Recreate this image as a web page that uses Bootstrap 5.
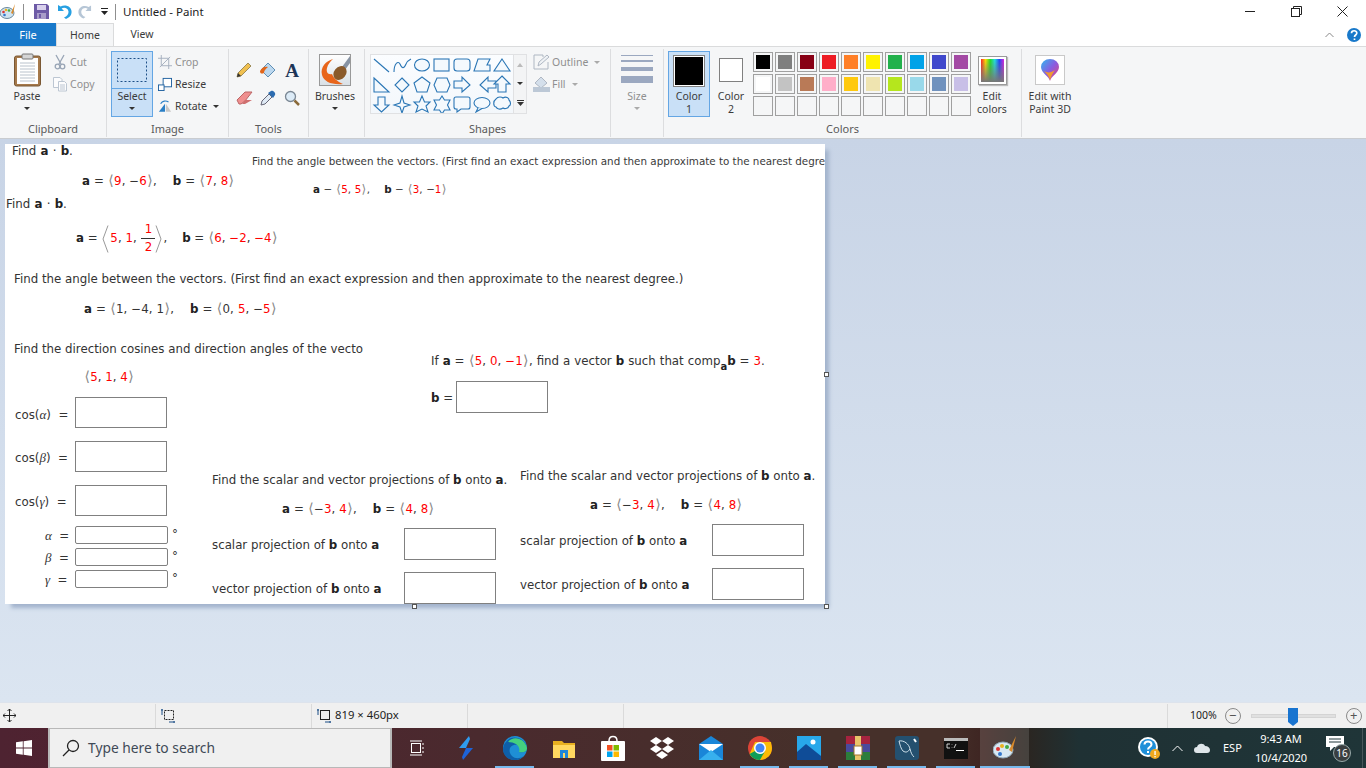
<!DOCTYPE html>
<html lang="en">
<head>
<meta charset="utf-8">
<title>Untitled - Paint</title>
<link href="https://cdn.jsdelivr.net/npm/bootstrap@5.3.0/dist/css/bootstrap.min.css" rel="stylesheet">
<style>
html,body{height:100%;overflow:hidden}
body{width:1366px;height:768px;font-family:"Noto Sans","Open Sans",sans-serif;font-size:11px;color:#3b3b3b;background:#fff}
svg{display:block;flex:none}
.titlebar{height:23px;background:#fff;flex:none}
.tb-sep{width:1px;height:16px;background:#8f8f8f}
.tm6{margin-left:6px}.tm8{margin-left:8px}.tm10{margin-left:10px}
.title-text{font-size:11.5px;color:#222;margin-left:7px;line-height:23px}
.winbtn{width:46px;height:23px}
.winend{margin-right:1px}
.tabrow{height:23px;background:#fff;flex:none}
.file-tab{width:56px;background:#1979ca;color:#fff;font-size:11px;line-height:23px;text-align:center}
.home-tab{width:58px;background:#f5f6f7;border:1px solid #dadbdc;border-bottom:0;line-height:23px;text-align:center;color:#3b3b3b;font-size:10.5px}
.view-tab{width:56px;line-height:23px;text-align:center;color:#3b3b3b;font-size:10.5px}
.ribbon{height:93px;background:#f5f6f7;border-top:1px solid #dadbdc;border-bottom:1px solid #c9ccd0;padding:2px 0 1px;flex:none}
.rgroup{border-right:1px solid #dcdddf;display:flex;flex-direction:column;flex:none}
.rbody{height:72px;display:flex;padding-top:2px}
.rlabel{height:16px;line-height:16px;text-align:center;color:#5a5a5a;font-size:11px}
.w1{width:107px}.w2{width:122px}.w3{width:80px}.w4{width:56px}.w5{width:246px}.w6{width:53px}.w7{width:358px}.w8{width:60px;border-right:0}
.rbig{display:flex;flex-direction:column;align-items:center;flex:none;width:42px;height:66px;line-height:14px;color:#3b3b3b;text-align:center;font-size:10.5px}
.ricon{height:38px;display:flex;align-items:center;justify-content:center;flex:none}
.rbig span{display:block;height:13px;line-height:13px}
.ricon + span{margin-top:1px}
.caret-d{width:0;height:0;border-left:3px solid transparent;border-right:3px solid transparent;border-top:3px solid #333;flex:none}
.rbig .caret-d{margin-top:4px}
.caret-g{border-top-color:#aaa}
.m-paste{width:46px;margin-left:4px}
.sel-btn{margin-left:4px;background:#c9e0f7;border:1px solid #64a6e4}
.sel-btn .ricon{width:100%;height:37px;border-bottom:1px solid #64a6e4}
.cmdcol{display:flex;flex-direction:column;flex:none}
.m-c1{margin-left:2px}.m-c2{margin-left:5px}.m-c3{margin-left:6px}
.m-c2 svg{margin-right:1px}
.rsmall{height:22px;display:flex;align-items:center;gap:2px;white-space:nowrap;color:#3b3b3b;font-size:10.5px}
.rsmall span{padding-top:2px}
.dim{color:#8f8f8f}
.dim svg{opacity:.75}
.rsmall .caret-d{margin-left:4px}
.toolgrid{display:grid;grid-template-columns:repeat(3,24px);grid-auto-rows:28px;margin:5px 0 0 3px;justify-items:center;align-items:center}
.tool-a{font-family:"Liberation Serif",serif;font-size:19px;font-weight:700;color:#1d3557;line-height:19px}
.m-brush{width:52px}
.gallery{width:157px;height:60px;margin:3px 0 0 5px;border:1px solid #e0e1e3;background:linear-gradient(#fbfdff,#f3f7fb);flex:none}
.gal-scroll{width:14px;background:#f3f4f5;border-left:1px solid #e0e1e3}
.gal-scroll>div{flex:1;display:flex;align-items:center;justify-content:center}
.caret-u{width:0;height:0;border-left:3px solid transparent;border-right:3px solid transparent;border-bottom:4px solid #bbb}
.m-size{width:52px}
.size-ic{margin-top:-2px}
.col1-btn{margin-left:4px;background:#c9e0f7;border:1px solid #64a6e4}
.col1-btn .ricon{height:37px}
.swatch-big{width:32px;height:32px;background:#000;border:1px solid #808080;box-shadow:inset 0 0 0 1px #fff}
.swatch-2{width:24px;height:24px;background:#fff;border:1px solid #808080}
.palette{display:grid;grid-template-columns:repeat(10,20px);grid-auto-rows:20px;gap:2px;margin:1px 0 0 1px;align-self:flex-start;flex:none}
.pc{border:1px solid #a0a0a0;padding:2px;background-clip:content-box;background-color:#fff}
.pc-e{background:none;padding:0}
.c1{background-color:#000}.c2{background-color:#7f7f7f}.c3{background-color:#880015}.c4{background-color:#ed1c24}.c5{background-color:#ff7f27}.c6{background-color:#fff200}.c7{background-color:#22b14c}.c8{background-color:#00a2e8}.c9{background-color:#3f48cc}.c10{background-color:#a349a4}
.c11{background-color:#fff}.c12{background-color:#c3c3c3}.c13{background-color:#b97a57}.c14{background-color:#ffaec9}.c15{background-color:#ffc90e}.c16{background-color:#efe4b0}.c17{background-color:#b5e61d}.c18{background-color:#99d9ea}.c19{background-color:#7092be}.c20{background-color:#c8bfe7}
.m-edit{width:38px;margin-left:2px}.m-3d{width:56px}
.edit-ic{width:29px;height:29px;border:1px solid #9a9a9a;padding:2px;background:#fff;box-shadow:1px 1px 1px #bbb}
.edit-ic>div{width:100%;height:100%;background:linear-gradient(transparent,#777),linear-gradient(90deg,#ff2020,#ffe000,#20e020,#20e0e0,#2040ff,#e020e0)}
.d3-ic{width:30px;height:30px;border:1px solid #c9c9c9;background:#fff;display:flex;align-items:center;justify-content:center}
.canvasarea{height:563px;flex:none;background:linear-gradient(#c8d4e6,#dbe5f1);position:relative;overflow:hidden}
.sheet{position:absolute;left:5px;top:5px;width:820px;height:460px;background:#fff;box-shadow:5px 5px 4px -1px #a3b4cd;overflow:hidden;font-family:"DejaVu Sans",sans-serif;font-size:11.8px;color:#333}
.handle{position:absolute;width:5px;height:5px;background:#fff;border:1px solid #555}
.h1{left:824px;top:233px}.h2{left:412px;top:465px}.h3{left:824px;top:465px}
.t{position:absolute;white-space:nowrap;line-height:16px;margin-top:1px}
.t b{color:#222}
.r{color:#f00}
.g{color:#888;font-size:14px;line-height:14px;margin:0 .4px}
.mth{word-spacing:.25px}
.wide-dot{word-spacing:.5px}
.blur{font-size:10.35px;color:#3a3a3a}
.blur .g{font-size:12px}
.big-a{display:inline-block;vertical-align:middle;margin:0 1px}
.frac{display:inline-flex;flex-direction:column;align-items:center;vertical-align:middle;width:14px;margin:0 -1px 0 1px}
.frac span{display:block;height:17px;line-height:17px;width:100%;text-align:center;color:#f00}
.frac span + span{border-top:1px solid #333;height:18px}
.greek{font-family:"Liberation Serif",serif;font-style:italic;font-size:13px}
.box{position:absolute;width:92px;height:32px;border:1px solid #808080;border-radius:0;padding:0;min-height:0}
.box-31{height:31px}
.box-s{position:absolute;width:93px;height:18px;border:1px solid #808080;border-radius:2px;padding:0;min-height:0}
.statusbar{height:26px;flex:none;background:#f0f0f0;border-top:1px solid #dde3ec;font-size:10.5px;color:#222}
.st{width:156px;border-right:1px solid #dadada;height:24px;display:flex;align-items:center;flex:none;gap:4px}
.st1{padding-left:3px}.st2{padding-left:5px}.st3{padding-left:5px}
.st3 span{font-size:11.3px}
.st-fill{flex:1;border-right:1px solid #dadada;height:24px}
.zoomwrap{width:198px;flex:none;padding-left:22px}
.zbtn{width:16px;height:16px;border:1px solid #8a8a8a;border-radius:50%;display:flex;align-items:center;justify-content:center;background:#f0f0f0;font-size:13px;line-height:1;color:#555;flex:none}
.ztrack{width:85px;height:4px;background:#e0e0e0;border:1px solid #d4d4d4;position:relative;margin:0 10px 0 10px;flex:none}
.zthumb{position:absolute;left:36px;top:-7px}
.taskbar{height:40px;flex:none;color:#fff;background:linear-gradient(90deg,#4e2331 0,#502230 8%,#4a2a2e 35%,#46302a 60%,#46302a 69%,#3e2522 72%,#2a2622 75.4%,#1f3134 79%,#1f3538 100%)}
.startb{width:48px;display:flex;align-items:center;justify-content:center;flex:none}
.searchb{width:344px;background:#f0f0f0;border:2px solid #b8b8b8;border-top-width:1px;border-bottom-width:1px;display:flex;align-items:center;padding-left:12px;gap:8px;color:#3f4a57;font-size:13.8px;flex:none;font-family:"Noto Sans",sans-serif}
.searchb span{padding-top:1px}
.tbi{width:49px;display:flex;align-items:center;justify-content:center;position:relative;flex:none}
.tbi.on::after{content:"";position:absolute;left:5px;right:5px;bottom:0;height:2px;background:#76b9ed}
.tbi.act::after{left:0;right:-1px}
.tbi.act{background:rgba(255,255,255,.13)}
.tray{font-size:11px;flex:1}
.ty-help{margin-left:108px}
.ty-up{margin-left:11px}
.ty-cloud{margin-left:11px}
.ty-esp{margin-left:13px;width:22px}
.clock{text-align:center;line-height:19px;font-size:11px;width:72px;flex:none}
.notif{position:relative;width:24px;height:24px;margin-left:9px;flex:none}
.nbadge{position:absolute;left:7px;top:8px;width:18px;height:18px;border-radius:50%;background:#3a3f41;border:1px solid #9aa;font-size:10px;line-height:16px;text-align:center;color:#fff}
.ty-edge{width:1px;height:40px;background:#47565a;margin-left:12px}
/* positions on the pasted sheet */
.a1{left:7px;top:-2px}.a2{left:247px;top:8px}.a3{left:77px;top:28px}.a4{left:308px;top:36px}.a5{left:1px;top:51px}.a6{left:71px;top:76px}
.a7{left:9px;top:126px}.a8{left:79px;top:156px}.a9{left:9px;top:196px;width:349px;overflow:hidden}.a10{left:79px;top:224px}
.a11{left:10px;top:262px}.a12{left:10px;top:305px}.a13{left:10px;top:349px}
.a14{left:40px;top:383px}.a15{left:40px;top:405px}.a16{left:40px;top:427px}
.d1{left:167px;top:381px}.d2{left:167px;top:403px}.d3{left:167px;top:425px}
.b1{left:70px;top:253px}.b2{left:70px;top:297px}.b3{left:70px;top:341px}
.b4{left:70px;top:382px}.b5{left:70px;top:404px}.b6{left:70px;top:426px}
.a17{left:207px;top:327px}.a18{left:277px;top:356px}.a19{left:207px;top:392px}.a20{left:207px;top:436px}
.b7{left:399px;top:384px}.b8{left:399px;top:428px}
.a21{left:426px;top:208px}.a-sub{font-size:10px;bottom:-.5em}.a22{left:426px;top:245px}.b9{left:451px;top:237px}
.a23{left:515px;top:323px}.a24{left:585px;top:352px}.a25{left:515px;top:388px}.a26{left:515px;top:432px}
.b10{left:707px;top:380px}.b11{left:707px;top:424px}
</style>
</head>
<body class="d-flex flex-column">

<!-- Title bar -->
<div class="titlebar d-flex align-items-center">
  <svg width="17" height="17" viewBox="0 0 17 17"><ellipse cx="7" cy="10" rx="7" ry="5.5" fill="#cfe3f0" stroke="#6b8aa0"/><circle cx="3.5" cy="9" r="1.3" fill="#d33"/><circle cx="6" cy="7" r="1.3" fill="#e9b320"/><circle cx="9" cy="7.5" r="1.3" fill="#4a4"/><circle cx="4.5" cy="12" r="1.3" fill="#37c"/><path d="M15 1 L11 10 L13 11 Z" fill="#d98a2b"/></svg>
  <div class="tb-sep tm6"></div>
  <svg class="tm10" width="15" height="15" viewBox="0 0 15 15"><path d="M0 0H13L15 2V15H0Z" fill="#6d5aa6"/><rect x="3" y="1" width="9" height="5" fill="#d8d0ec"/><rect x="3" y="9" width="9" height="6" fill="#a89cc9"/><rect x="5" y="10" width="2" height="4" fill="#6d5aa6"/></svg>
  <svg class="tm8" width="15" height="15" viewBox="0 0 15 15"><path d="M1 1V7H7L4.6 4.6C7 3 11 4 11.5 7.5C11.8 10 10 12.5 7 13.5L9 15C13 13.5 15 10.5 14.5 7C14 2.5 8.5 0 3.6 2.6Z" fill="#27a0e2"/></svg>
  <svg class="tm6" width="14" height="15" viewBox="0 0 15 15"><path d="M14 1V7H8L10.4 4.6C8 3 4 4 3.5 7.5C3.2 10 5 12.5 8 13.5L6 15C2 13.5 0 10.5 .5 7C1 2.5 6.5 0 11.4 2.6Z" fill="#b6c6d6"/></svg>
  <svg class="tm8" width="9" height="9" viewBox="0 0 9 9"><rect x="1" y="1" width="7" height="1" fill="#222"/><path d="M1 4H8L4.5 8Z" fill="#222"/></svg>
  <div class="tb-sep tm6"></div>
  <div class="title-text">Untitled - Paint</div>
  <div class="flex-grow-1"></div>
  <div class="winbtn d-flex align-items-center justify-content-center"><svg width="11" height="11" viewBox="0 0 11 11"><rect x="0" y="5" width="10" height="1" fill="#222"/></svg></div>
  <div class="winbtn d-flex align-items-center justify-content-center"><svg width="11" height="11" viewBox="0 0 11 11" fill="none" stroke="#222"><rect x=".5" y="2.5" width="8" height="8"/><path d="M2.5 2.5V.5H10.5V8.5H8.5"/></svg></div>
  <div class="winbtn winend d-flex align-items-center justify-content-center"><svg width="11" height="11" viewBox="0 0 11 11" stroke="#222" stroke-width="1"><path d="M.5 .5L10.5 10.5M10.5 .5L.5 10.5"/></svg></div>
</div>

<!-- Tabs -->
<div class="tabrow d-flex">
  <div class="file-tab">File</div>
  <div class="home-tab">Home</div>
  <div class="view-tab">View</div>
  <div class="flex-grow-1"></div>
  <div class="d-flex align-items-center gap-2 pe-1">
    <svg width="9" height="6" viewBox="0 0 9 6" fill="none" stroke="#888"><path d="M.5 5L4.5 1L8.5 5"/></svg>
    <svg width="16" height="16" viewBox="0 0 16 16" class="ms-1"><circle cx="8" cy="8" r="7" fill="#1979ca"/><path d="M5.5 6.2C5.5 3 10.8 3 10.8 6C10.8 8 8.5 8 8.5 10M8.5 11.5V13" fill="none" stroke="#fff" stroke-width="1.7"/></svg>
  </div>
</div>

<!-- Ribbon -->
<div class="ribbon d-flex">
  <div class="rgroup w1">
    <div class="rbody">
      <div class="rbig m-paste">
        <div class="ricon"><svg width="27" height="34" viewBox="0 0 27 34"><rect x=".5" y="3" width="26" height="30" rx="2" fill="#a5794b" stroke="#7a5834"/><rect x="3" y="5" width="21" height="26" fill="#fff"/><path d="M6 10H21M6 13H21M6 16H21M6 19H21M6 22H21M6 25H21M6 28H21" stroke="#b9c2cc"/><rect x="8" y="1" width="11" height="5" rx="1" fill="#d5d5d5" stroke="#777"/></svg></div>
        <span>Paste</span><div class="caret-d"></div>
      </div>
      <div class="cmdcol m-c1">
        <div class="rsmall dim"><svg width="16" height="16" viewBox="0 0 16 16" fill="none" stroke="#7a8aa0" stroke-width="1.3"><path d="M4 1L9 10M12 1L7 10"/><circle cx="5.5" cy="12.5" r="2.3"/><circle cx="10.5" cy="12.5" r="2.3"/></svg><span>Cut</span></div>
        <div class="rsmall dim"><svg width="16" height="16" viewBox="0 0 16 16" fill="#fff" stroke="#a9b6c6"><path d="M1.5 1.5H8L10 3.5V11.5H1.5Z"/><path d="M6.5 5.5H12.5L14.5 7.5V15H6.5Z"/><path d="M8 9H13M8 11H13M8 13H13"/></svg><span>Copy</span></div>
      </div>
    </div>
    <div class="rlabel">Clipboard</div>
  </div>

  <div class="rgroup w2">
    <div class="rbody">
      <div class="rbig sel-btn">
        <div class="ricon"><svg width="30" height="24" viewBox="0 0 30 24"><rect x=".5" y=".5" width="29" height="23" fill="none" stroke="#1c4f86" stroke-dasharray="2 2"/></svg></div>
        <span>Select</span><div class="caret-d"></div>
      </div>
      <div class="cmdcol m-c2">
        <div class="rsmall dim"><svg width="14" height="14" viewBox="0 0 15 15" fill="none" stroke="#8a97ab"><path d="M3.5 0V11.5H15M0 3.5H11.5V15"/><path d="M2 13L13 2"/></svg><span>Crop</span></div>
        <div class="rsmall"><svg width="14" height="14" viewBox="0 0 15 15" fill="#fff" stroke="#1d5f9e"><rect x="5.5" y="1.5" width="9" height="9"/><rect x=".5" y="8.5" width="6" height="6"/></svg><span>Resize</span></div>
        <div class="rsmall"><svg width="14" height="14" viewBox="0 0 16 15"><path d="M1 14L8 5V14Z" fill="#2a7fc6"/><path d="M9 14V5L15 14Z" fill="#c8c8c8"/><path d="M3 5C5 1.5 9 1 12 3" fill="none" stroke="#2a7fc6" stroke-width="1.3"/></svg><span>Rotate</span><div class="caret-d"></div></div>
      </div>
    </div>
    <div class="rlabel">Image</div>
  </div>

  <div class="rgroup w3">
    <div class="rbody">
      <div class="toolgrid">
        <svg width="16" height="16" viewBox="0 0 16 16"><path d="M1 15L2 11L12 1L15 4L5 14Z" fill="#f0c050" stroke="#7a6a3a" stroke-width=".7"/><path d="M1 15L2 11L5 14Z" fill="#333"/></svg>
        <svg width="18" height="18" viewBox="0 0 18 18"><path d="M9 2L16 9L9 16L2 9Z" fill="#bcd8ef" stroke="#5f8fb5"/><path d="M1 10C3 6 6 5 9 6C7 8 5 9 5 12C3 13 1 13 1 10Z" fill="#e2661a"/></svg>
        <div class="tool-a">A</div>
        <svg width="17" height="14" viewBox="0 0 17 14"><path d="M1 9L9 1H16L9 10L5 13H3Z" fill="#ef8f8f" stroke="#b66"/><path d="M6 13L9 9H16L9 13Z" fill="#cf6f6f"/></svg>
        <svg width="16" height="16" viewBox="0 0 16 16"><path d="M1 15L2 11L9 4L12 7L5 14Z" fill="#dfeaf5" stroke="#667"/><path d="M8 3L11 1C13 0 16 3 15 5L13 8Z" fill="#2c6cb0"/></svg>
        <svg width="16" height="16" viewBox="0 0 16 16"><circle cx="6.5" cy="6.5" r="5" fill="#dcebf7" stroke="#7a8794" stroke-width="1.3"/><path d="M10.5 10.5L15 15" stroke="#8a6a3a" stroke-width="2.5"/></svg>
      </div>
    </div>
    <div class="rlabel">Tools</div>
  </div>

  <div class="rgroup w4">
    <div class="rbody">
      <div class="rbig m-brush">
        <div class="ricon"><svg width="32" height="32" viewBox="0 0 32 32"><defs><linearGradient id="brbg" x1="0" y1="0" x2="0" y2="1"><stop offset="0" stop-color="#fff"/><stop offset="1" stop-color="#d9e0e6"/></linearGradient></defs><rect x=".5" y=".5" width="31" height="31" fill="url(#brbg)" stroke="#999"/><path d="M31 2L23 13L26 16L31 9Z" fill="#8793a3"/><path d="M14 5C7 7 1 13 3 21C5 28 13 31 24 30C18 27 15 25 13 20C9 21 7 18 8 14C9 10 11 8 14 5Z" fill="#e8651a"/><ellipse cx="21" cy="19" rx="6" ry="7.5" transform="rotate(40 21 19)" fill="#8a5a2a"/></svg></div>
        <span>Brushes</span><div class="caret-d"></div>
      </div>
    </div>
    <div class="rlabel"></div>
  </div>

  <div class="rgroup w5">
    <div class="rbody">
      <div class="gallery d-flex">
        <svg width="142" height="58" viewBox="0 -1 142 58" fill="#f4f9fd" stroke="#2a76b5" stroke-width="1.1">
          <path d="M3 3L18 16" fill="none"/>
          <path d="M23 16C23 8 27 4 29 8C31 13 33 13 35 8C36 5 38 4 40 3" fill="none"/>
          <ellipse cx="51" cy="9" rx="7.5" ry="6"/>
          <rect x="63" y="3" width="15" height="12"/>
          <rect x="83" y="3" width="16" height="12" rx="3"/>
          <path d="M103 15L107 3H119L116 9H119V15Z"/>
          <path d="M131 3L139 15H123Z"/>
          <path d="M3 22L18 36H3Z"/>
          <path d="M31 22L38 29L31 36L24 29Z"/>
          <path d="M51 21L59 27L56 36H46L43 27Z"/>
          <path d="M66 22H76L79 29L76 36H66L63 29Z"/>
          <path d="M83 25H91V21L99 29L91 36V32H83Z"/>
          <path d="M125 25H117V21L109 29L117 36V32H125Z"/>
          <path d="M131 20L139 28H135V36H127V28H123Z"/>
          <path d="M7 41H14V49H18L10.5 56L3 49H7Z"/>
          <path d="M31 40L33 47L39 49L33 51L31 57L29 51L23 49L29 47Z"/>
          <path d="M51 40L53.5 46H59L55 50L57 56L51 53L45 56L47 50L43 46H48.5Z"/>
          <path d="M71 40L73.5 44H79L76.5 49L79 54H73.5L71 58L68.5 54H63L65.5 49L63 44H68.5Z"/>
          <path d="M85 41H97Q99 41 99 43V51Q99 53 97 53H90L86 56V53H85Q83 53 83 51V43Q83 41 85 41Z"/>
          <ellipse cx="111" cy="47" rx="8" ry="5.5"/><path d="M107 52L105 56L111 52.5"/>
          <path d="M125 43C127 40 131 41 132 42C135 40 138 42 138 44C140 46 140 49 138 50C137 53 133 53 132 52C129 54 126 53 125 51C122 50 122 45 125 43Z"/>
        </svg>
        <div class="gal-scroll d-flex flex-column">
          <div><div class="caret-u"></div></div>
          <div><div class="caret-d"></div></div>
          <div><svg width="7" height="6" viewBox="0 0 7 6"><rect y="0" width="7" height="1" fill="#333"/><path d="M0 2H7L3.5 6Z" fill="#333"/></svg></div>
        </div>
      </div>
      <div class="cmdcol m-c3">
        <div class="rsmall dim"><svg width="17" height="16" viewBox="0 0 17 16" fill="none" stroke="#98a3b2"><path d="M1 1H10V3M1 1V15H15V8"/><path d="M5 12L6 8L14 1L16 3L8 10Z" fill="#eef1f5"/></svg><span>Outline</span><div class="caret-d caret-g"></div></div>
        <div class="rsmall dim"><svg width="17" height="16" viewBox="0 0 17 16"><path d="M8 1L14 7L8 12L2 7Z" fill="#c9d8e8" stroke="#98a3b2"/><rect x="0" y="11" width="17" height="5" fill="#a9b9cc"/></svg><span>Fill</span><div class="caret-d caret-g"></div></div>
      </div>
    </div>
    <div class="rlabel">Shapes</div>
  </div>

  <div class="rgroup w6">
    <div class="rbody">
      <div class="rbig m-size dim">
        <div class="ricon"><svg class="size-ic" width="32" height="30" viewBox="0 0 32 30" fill="#7e8fae"><rect y="1" width="32" height="1"/><rect y="6" width="32" height="2"/><rect y="13" width="32" height="4"/><rect y="22" width="32" height="7"/></svg></div>
        <span>Size</span><div class="caret-d caret-g"></div>
      </div>
    </div>
    <div class="rlabel"></div>
  </div>

  <div class="rgroup w7">
    <div class="rbody">
      <div class="rbig col1-btn">
        <div class="ricon"><div class="swatch-big"></div></div>
        <span>Color</span><span>1</span>
      </div>
      <div class="rbig">
        <div class="ricon"><div class="swatch-2"></div></div>
        <span>Color</span><span>2</span>
      </div>
      <div class="palette">
        <div class="pc c1"></div><div class="pc c2"></div><div class="pc c3"></div><div class="pc c4"></div><div class="pc c5"></div><div class="pc c6"></div><div class="pc c7"></div><div class="pc c8"></div><div class="pc c9"></div><div class="pc c10"></div>
        <div class="pc c11"></div><div class="pc c12"></div><div class="pc c13"></div><div class="pc c14"></div><div class="pc c15"></div><div class="pc c16"></div><div class="pc c17"></div><div class="pc c18"></div><div class="pc c19"></div><div class="pc c20"></div>
        <div class="pc pc-e"></div><div class="pc pc-e"></div><div class="pc pc-e"></div><div class="pc pc-e"></div><div class="pc pc-e"></div><div class="pc pc-e"></div><div class="pc pc-e"></div><div class="pc pc-e"></div><div class="pc pc-e"></div><div class="pc pc-e"></div>
      </div>
      <div class="rbig m-edit">
        <div class="ricon"><div class="edit-ic"><div></div></div></div>
        <span>Edit</span><span>colors</span>
      </div>
    </div>
    <div class="rlabel">Colors</div>
  </div>

  <div class="rgroup w8">
    <div class="rbody">
      <div class="rbig m-3d">
        <div class="ricon"><div class="d3-ic"><svg width="18" height="22" viewBox="0 0 18 22"><defs><linearGradient id="d3" x1="0" y1="0" x2="1" y2="1"><stop offset="0" stop-color="#2fb8f0"/><stop offset=".5" stop-color="#8a5be0"/><stop offset="1" stop-color="#f0436a"/></linearGradient></defs><path d="M9 22C8 17 0 14 0 8A9 8 0 0 1 18 8C18 14 10 17 9 22Z" fill="url(#d3)"/><path d="M9 21C8 17 5 14 3 12C6 14 10 14 14 11C12 14 10 17 9 21Z" fill="#f09a30"/></svg></div></div>
        <span>Edit with</span><span>Paint 3D</span>
      </div>
    </div>
    <div class="rlabel"></div>
  </div>
</div>

<!-- Canvas -->
<div class="canvasarea">
  <div class="sheet">
    <div class="t a1 wide-dot">Find <b>a</b> · <b>b</b>.</div>
    <div class="t blur a2">Find the angle between the vectors. (First find an exact expression and then approximate to the nearest degre</div>
    <div class="t a3 mth"><b>a</b> = <span class="g">⟨</span><span class="r">9</span>, −<span class="r">6</span><span class="g">⟩</span>, &nbsp; &nbsp;<b>b</b> = <span class="g">⟨</span><span class="r">7</span>, <span class="r">8</span><span class="g">⟩</span></div>
    <div class="t blur a4 mth"><b>a</b> − <span class="g">⟨</span><span class="r">5</span>, <span class="r">5</span><span class="g">⟩</span>, &nbsp; &nbsp;<b>b</b> − <span class="g">⟨</span><span class="r">3</span>, −<span class="r">1</span><span class="g">⟩</span></div>
    <div class="t a5 wide-dot">Find <b>a</b> · <b>b</b>.</div>
    <div class="t a6"><b>a</b> = <svg class="big-a" width="7" height="28" viewBox="0 0 7 28" fill="none" stroke="#999"><path d="M6 .5L1 14L6 27.5"/></svg><span class="r">5</span>, <span class="r">1</span>, <span class="frac"><span>1</span><span>2</span></span><svg class="big-a" width="7" height="28" viewBox="0 0 7 28" fill="none" stroke="#999"><path d="M1 .5L6 14L1 27.5"/></svg>, &nbsp; &nbsp;<b>b</b> = <span class="g">⟨</span><span class="r">6</span>, <span class="r">−2</span>, <span class="r">−4</span><span class="g">⟩</span></div>
    <div class="t a7">Find the angle between the vectors. (First find an exact expression and then approximate to the nearest degree.)</div>
    <div class="t a8 mth"><b>a</b> = <span class="g">⟨</span>1, −4, 1<span class="g">⟩</span>, &nbsp; &nbsp;<b>b</b> = <span class="g">⟨</span>0, <span class="r">5</span>, −<span class="r">5</span><span class="g">⟩</span></div>
    <div class="t a9">Find the direction cosines and direction angles of the vector</div>
    <div class="t a10"><span class="g">⟨</span><span class="r">5</span>, <span class="r">1</span>, <span class="r">4</span><span class="g">⟩</span></div>
    <div class="t a11">cos(<span class="greek">α</span>) &nbsp;=</div>
    <input class="form-control box box-31 b1" aria-label="cos alpha">
    <div class="t a12">cos(<span class="greek">β</span>) &nbsp;=</div>
    <input class="form-control box box-31 b2" aria-label="cos beta">
    <div class="t a13">cos(<span class="greek">γ</span>) &nbsp;=</div>
    <input class="form-control box box-31 b3" aria-label="cos gamma">
    <div class="t a14"><span class="greek">α</span> &nbsp;=</div>
    <input class="form-control box-s b4" aria-label="alpha"><div class="t d1">°</div>
    <div class="t a15"><span class="greek">β</span> &nbsp;=</div>
    <input class="form-control box-s b5" aria-label="beta"><div class="t d2">°</div>
    <div class="t a16"><span class="greek">γ</span> &nbsp;=</div>
    <input class="form-control box-s b6" aria-label="gamma"><div class="t d3">°</div>

    <div class="t a17">Find the scalar and vector projections of <b>b</b> onto <b>a</b>.</div>
    <div class="t a18 mth"><b>a</b> = <span class="g">⟨</span>−<span class="r">3</span>, <span class="r">4</span><span class="g">⟩</span>, &nbsp; &nbsp;<b>b</b> = <span class="g">⟨</span><span class="r">4</span>, <span class="r">8</span><span class="g">⟩</span></div>
    <div class="t a19">scalar projection of <b>b</b> onto <b>a</b></div>
    <input class="form-control box b7" aria-label="scalar projection">
    <div class="t a20">vector projection of <b>b</b> onto <b>a</b></div>
    <input class="form-control box b8" aria-label="vector projection">

    <div class="t a21 mth">If <b>a</b> = <span class="g">⟨</span><span class="r">5</span>, <span class="r">0</span>, <span class="r">−1</span><span class="g">⟩</span>, find a vector <b>b</b> such that comp<sub class="a-sub"><b>a</b></sub><b>b</b> = <span class="r">3</span>.</div>
    <div class="t a22"><b>b</b> =</div>
    <input class="form-control box b9" aria-label="b">

    <div class="t a23">Find the scalar and vector projections of <b>b</b> onto <b>a</b>.</div>
    <div class="t a24 mth"><b>a</b> = <span class="g">⟨</span>−<span class="r">3</span>, <span class="r">4</span><span class="g">⟩</span>, &nbsp; &nbsp;<b>b</b> = <span class="g">⟨</span><span class="r">4</span>, <span class="r">8</span><span class="g">⟩</span></div>
    <div class="t a25">scalar projection of <b>b</b> onto <b>a</b></div>
    <input class="form-control box b10" aria-label="scalar projection">
    <div class="t a26">vector projection of <b>b</b> onto <b>a</b></div>
    <input class="form-control box b11" aria-label="vector projection">
  </div>
  <div class="handle h1"></div><div class="handle h2"></div><div class="handle h3"></div>
</div>

<!-- Status bar -->
<div class="statusbar d-flex align-items-center">
  <div class="st st1"><svg width="13" height="13" viewBox="0 0 13 13" fill="none" stroke="#222"><path d="M6.5 0V13M0 6.5H13M4.5 2L6.5 0L8.5 2M4.5 11L6.5 13L8.5 11M2 4.5L0 6.5L2 8.5M11 4.5L13 6.5L11 8.5"/></svg></div>
  <div class="st st2"><svg width="14" height="14" viewBox="0 0 14 14" fill="none" stroke="#222"><rect x="3.5" y="1.5" width="9" height="9" stroke-dasharray="2 1"/><path d="M1 0V6M0 1H2M8 13H14M13 12V14" stroke="#1c4f86"/></svg></div>
  <div class="st st3"><svg width="14" height="14" viewBox="0 0 14 14" fill="none" stroke="#222"><rect x="3.5" y="1.5" width="9" height="9"/><path d="M1 0V6M0 1H2M8 13H14M13 12V14" stroke="#1c4f86"/></svg><span>819 × 460px</span></div>
  <div class="st"></div>
  <div class="st-fill"></div>
  <div class="zoomwrap d-flex align-items-center">
    <span class="me-2">100%</span>
    <div class="zbtn">−</div>
    <div class="ztrack"><svg class="zthumb" width="10" height="18" viewBox="0 0 10 18"><path d="M0 0H10V14L5 18L0 14Z" fill="#1874d0"/></svg></div>
    <div class="zbtn">+</div>
  </div>
</div>

<!-- Taskbar -->
<div class="taskbar d-flex">
  <div class="startb"><svg width="16" height="16" viewBox="0 0 16 16" fill="#fff"><path d="M0 2.3L6.8 1.3V7.6H0ZM7.6 1.2L16 0V7.6H7.6ZM0 8.4H6.8V14.7L0 13.7ZM7.6 8.4H16V16L7.6 14.8Z"/></svg></div>
  <div class="searchb"><svg width="18" height="18" viewBox="0 0 18 18" fill="none" stroke="#222" stroke-width="1.3"><circle cx="11" cy="7" r="5.5"/><path d="M7 11L1 17"/></svg><span>Type here to search</span></div>
  <div class="tbi"><svg width="16" height="16" viewBox="0 0 16 16" fill="none" stroke="#fff"><rect x="2.5" y="3.5" width="9" height="9"/><path d="M1 1H13M1 15H13M14 3V5M14 7V9M14 11V13" /></svg></div>
  <div class="tbi"><svg width="16" height="24" viewBox="0 0 16 24"><path d="M11 0L1 12L8 12L12 3Z" fill="#2f9cf0"/><path d="M5 24L15 12L8 12L4 21Z" fill="#1d63d8"/></svg></div>
  <div class="tbi on"><svg width="24" height="24" viewBox="0 0 24 24"><circle cx="12" cy="12" r="12" fill="#1e8fd5"/><path d="M3 6C8 -2 22 1 24 12C24 16 20 17 16 16C19 12 15 8 11 9C6 10 5 16 9 20C12 23 17 23 20 20C14 28 1 24 0 14C0 10 1 8 3 6Z" fill="#0e5fa8"/><path d="M5 6C10 -1 22 2 24 12C24 16 20 17 16 16C18 10 12 6 5 6Z" fill="#44d07f"/></svg></div>
  <div class="tbi"><svg width="22" height="20" viewBox="0 0 22 20"><path d="M0 3H9L11 5H22V20H0Z" fill="#e8b020"/><path d="M0 7H22V20H0Z" fill="#ffd860"/><path d="M7 12H15V20H12V15H10V20H7Z" fill="#1e86d8"/></svg></div>
  <div class="tbi"><svg width="24" height="26" viewBox="0 0 24 26"><path d="M8 6C8 0 16 0 16 6" fill="none" stroke="#fff" stroke-width="1.5"/><rect x="0" y="6" width="24" height="20" rx="1" fill="#fff"/><rect x="6" y="10" width="5.5" height="5.5" fill="#f25022"/><rect x="12.5" y="10" width="5.5" height="5.5" fill="#7fba00"/><rect x="6" y="16.5" width="5.5" height="5.5" fill="#00a4ef"/><rect x="12.5" y="16.5" width="5.5" height="5.5" fill="#ffb900"/></svg></div>
  <div class="tbi"><svg width="24" height="22" viewBox="0 0 24 22" fill="#fff"><path d="M6 0L12 4L6 8L0 4ZM18 0L24 4L18 8L12 4ZM6 8L12 12L6 16L0 12ZM18 8L24 12L18 16L12 12ZM12 14L18 18L12 22L6 18Z"/></svg></div>
  <div class="tbi"><svg width="24" height="24" viewBox="0 0 24 24"><path d="M0 8L12 0L24 8V24H0Z" fill="#1a86d8"/><path d="M0 8H24L12 16Z" fill="#fff"/><path d="M0 24L12 14L24 24Z" fill="#37b0ee"/></svg></div>
  <div class="tbi on"><svg width="24" height="24" viewBox="0 0 24 24"><circle cx="12" cy="12" r="12" fill="#db4437"/><path d="M1.6 18L7 6H23L24 12A12 12 0 0 1 12 24C7.5 24 3.6 21.5 1.6 18Z" fill="#fbbc05"/><path d="M1.6 18A12 12 0 0 0 12 24L17 15L7 15Z" fill="#0f9d58"/><circle cx="12" cy="12" r="6" fill="#fff"/><circle cx="12" cy="12" r="4.5" fill="#4285f4"/></svg></div>
  <div class="tbi on"><svg width="24" height="24" viewBox="0 0 24 24"><rect width="24" height="24" fill="#28a8ea"/><path d="M0 24V16L9 8L24 20V24Z" fill="#0f4c97"/><circle cx="16" cy="6" r="2.5" fill="#fff"/></svg></div>
  <div class="tbi on"><svg width="24" height="24" viewBox="0 0 24 24"><rect x="0" y="0" width="24" height="8" fill="#a6233f"/><rect x="0" y="8" width="24" height="8" fill="#4a4a9e"/><rect x="0" y="16" width="24" height="8" fill="#2c7d3b"/><rect x="9" y="0" width="6" height="24" fill="#e9c46a"/><rect x="8" y="10" width="8" height="9" fill="#fff" stroke="#a0752d"/></svg></div>
  <div class="tbi on"><svg width="24" height="24" viewBox="0 0 24 24"><rect width="24" height="24" rx="3" fill="#24506f"/><path d="M4 5C9 4 14 8 15 13C16 17 17 19 19 21M15 13C13 16 11 17 8 15C6 13 5 9 4 5" fill="none" stroke="#cfe0ea" stroke-width="1"/><path d="M19 3L21 6" stroke="#fff" stroke-width="2"/></svg></div>
  <div class="tbi on"><svg width="24" height="21" viewBox="0 0 24 21"><rect width="24" height="21" fill="#111"/><rect width="24" height="3" fill="#bbb"/><path d="M3 6H6M3 6V10H6M8 6.5V7M8 9V9.5M10 10L12 6" stroke="#fff" fill="none" stroke-width=".8"/><rect x="12" y="12" width="8" height="1" fill="#fff"/></svg></div>
  <div class="tbi on act"><svg width="24" height="24" viewBox="0 0 24 24"><ellipse cx="10" cy="14" rx="10" ry="8" fill="#d8e8f2" stroke="#8fa8b8"/><circle cx="5" cy="13" r="2" fill="#d33"/><circle cx="9" cy="10" r="2" fill="#e9b320"/><circle cx="14" cy="11" r="2" fill="#4a4"/><circle cx="7" cy="18" r="2" fill="#37c"/><path d="M23 0L16 14L19 16Z" fill="#d98a2b"/></svg></div>

  <div class="tray d-flex align-items-center">
    <svg class="ty-help" width="24" height="24" viewBox="0 0 24 24"><circle cx="11" cy="11" r="10" fill="#fff"/><circle cx="11" cy="11" r="8" fill="#1f8fd8"/><path d="M7.5 8.5C7.5 4.5 14.5 4.5 14.5 8.5C14.5 11 11 11 11 13.5M11 15V17" fill="none" stroke="#fff" stroke-width="2"/><circle cx="18" cy="18" r="5" fill="#f0a81e"/><rect x="17.4" y="15" width="1.3" height="4" fill="#fff"/><rect x="17.4" y="20" width="1.3" height="1.3" fill="#fff"/></svg>
    <svg class="ty-up" width="11" height="7" viewBox="0 0 11 7" fill="none" stroke="#fff"><path d="M.5 6L5.5 1L10.5 6"/></svg>
    <svg class="ty-cloud" width="16" height="10" viewBox="0 0 16 10" fill="#dfe6ea"><path d="M3 10A3 3 0 0 1 3 4C4 0 10 0 11 3C14 3 16 5 16 7C16 9 15 10 13 10Z"/></svg>
    <span class="ty-esp">ESP</span>
    <div class="clock">9:43 AM<br>10/4/2020</div>
    <div class="notif"><svg width="18" height="15" viewBox="0 0 18 15" fill="#fff"><path d="M0 0H18V11H8L4 15V11H0Z"/><path d="M3 3H15M3 6H15" stroke="#1f3538"/></svg><div class="nbadge">16</div></div>
    <div class="ty-edge"></div>
  </div>
</div>

<script src="https://cdn.jsdelivr.net/npm/bootstrap@5.3.0/dist/js/bootstrap.bundle.min.js"></script>
</body>
</html>
